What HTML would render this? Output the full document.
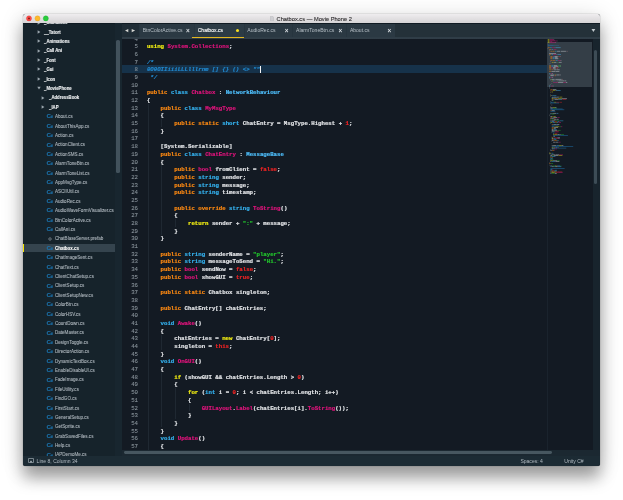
<!DOCTYPE html>
<html lang="en"><head><meta charset="utf-8"><title>Chatbox.cs — Movie Phone 2</title>
<style>
html,body{margin:0;padding:0;background:#fff;}
body{width:623px;height:500px;position:relative;overflow:hidden;font-family:"Liberation Sans",sans-serif;-webkit-font-smoothing:antialiased;}
.win{position:absolute;left:23px;top:14px;width:576.5px;height:451.5px;border-radius:2.5px;background:#131a23;
 box-shadow:0 12px 16px 0 rgba(0,0,0,.34),0 3px 24px rgba(0,0,0,.14),0 0 0 .5px rgba(0,0,0,.12);}
.clip{position:absolute;left:0;top:0;right:0;bottom:0;border-radius:2.5px;overflow:hidden;will-change:transform;}
.title{position:absolute;left:0;top:0;right:0;height:8.8px;background:linear-gradient(#efedef,#d6d4d6);}
.title b{position:absolute;top:1.8px;width:5.3px;height:5.3px;border-radius:50%;box-sizing:border-box;}
.title .ttl{position:absolute;left:253.6px;top:0;height:9px;line-height:10px;font-size:5.69px;color:#2c2a2c;white-space:nowrap;-webkit-text-stroke:.1px;}
.title .doc{position:absolute;left:247.2px;top:2.4px;width:3.2px;height:4.2px;background:#9d9da3;border-radius:.4px;}
.side{position:absolute;left:0;top:8.8px;width:99px;bottom:9.5px;background:#16232b;overflow:hidden;}
.side .in{position:absolute;left:0;top:-8.8px;width:99px;}
.side:before{content:"";position:absolute;left:0;right:0;top:0;height:.9px;background:#0f1a22;}
.sgap{position:absolute;left:91.5px;top:9px;width:7.5px;bottom:9.5px;background:#18262f;}
.sthumb{position:absolute;left:93.4px;top:25.5px;width:3.2px;height:133px;border-radius:1.6px;background:#42525c;}
.fo,.fi,.cs{position:absolute;height:9.397px;line-height:9.397px;white-space:nowrap;}
.fo{font-weight:bold;font-size:4.85px;color:#f1f3f5;transform:scaleX(.885);transform-origin:0 50%;margin-top:.45px;-webkit-text-stroke:.12px;}
.fi{left:32px;font-size:4.55px;color:#aeb7be;margin-top:.45px;-webkit-text-stroke:.08px;}
.fi.on{color:#fff;font-weight:bold;font-size:4.45px;}
.cs{left:23.6px;font-size:6.2px;font-weight:bold;color:#1c73ad;letter-spacing:-.45px;margin-top:-.35px;-webkit-text-stroke:.1px;}
.cs small{font-size:3.6px;}
.pf{position:absolute;left:24.6px;}
.ar{position:absolute;}
.sel{position:absolute;left:0;width:91.7px;height:8.5px;background:#35444e;border-left:1.5px solid #f6e500;box-sizing:border-box;}
.tabs{position:absolute;left:99px;top:8.8px;right:0;height:16.2px;background:#243139;}
.tabs .tl{position:absolute;left:0;right:0;top:0;height:1px;background:#101b23;}
.tabs .nav{position:absolute;left:0;top:1px;width:17px;height:12.8px;background:#202d36;}
.tabs .under{position:absolute;left:0;right:0;top:13.8px;height:2.4px;background:linear-gradient(#2c3943,#34424c 60%,#2a3640);}
.tab{position:absolute;top:1px;height:12.8px;background:#2b3943;box-shadow:inset .5px 0 0 #25323c;}
.tab span{position:absolute;left:3.7px;top:0;line-height:13.4px;font-size:5.05px;color:#b7c0c7;white-space:nowrap;}
.tab.act span{color:#fff;left:4.1px;-webkit-text-stroke:.1px;}
.tab.act{background:#2c3b45;}
.tab.act:after{content:"";position:absolute;left:-1.5px;right:0;top:12.9px;height:1.3px;background:#e3b71f;}
.tab .x{position:absolute;right:3.9px;top:0;line-height:13.2px;font-size:6.4px;font-style:normal;font-weight:bold;color:#d9dee2;}
.tab .dot{position:absolute;right:4.6px;top:5px;width:3.2px;height:3.2px;border-radius:50%;background:#f7df1e;}
.ed{position:absolute;left:99px;top:25px;width:425px;height:410.5px;background:#131a23;overflow:hidden;}
.hl{position:absolute;left:0;right:0;top:26.31px;height:7.693px;background:#16324a;}
.gut,.code{position:absolute;top:-3.459px;margin:0;font-family:"Liberation Mono",monospace;font-weight:bold;font-size:5.717px;line-height:7.693px;white-space:pre;}
.gut{left:0;width:16px;text-align:right;color:#8a949c;font-weight:normal;-webkit-text-stroke:.08px;}
.code{left:24.9px;color:#e2e4e7;-webkit-text-stroke:.18px;}
.ig{position:absolute;width:.5px;background:#1f2832;}
.cur{position:absolute;left:138.09px;top:26.71px;width:.6px;height:6.89px;background:#f4f4f4;}
.k{color:#ff8a12}.t{color:#35b4f2}.b{color:#e0147c}.n{color:#e0147c}.i{color:#4fc1ff}.r{color:#f02323}.s{color:#22c42c}.y{color:#f2ee12}.c{color:#2187cc}
.c{font-style:italic}
.mmw{position:absolute;left:524.2px;top:25px;width:45.3px;height:410.5px;background:#131a23;box-shadow:inset .6px 0 0 #202a34;overflow:hidden;}
.mmv{position:absolute;left:0;top:3.1px;width:44.8px;height:45.4px;background:#343e47;}
.mm{position:absolute;left:0;top:0;opacity:.72;}
.vs{position:absolute;left:569.5px;top:25px;width:7px;height:420px;background:#18242d;}
.vs i{position:absolute;left:1.9px;top:10.6px;width:2.9px;height:134px;border-radius:1.5px;background:#3d4c56;}
.hs{position:absolute;left:99px;top:435.5px;right:0;height:6.5px;background:#1b2831;}
.hs i{position:absolute;left:1.6px;top:1.4px;width:428px;height:2.7px;border-radius:1.4px;background:#475760;}
.stat{position:absolute;left:0;right:0;bottom:0;height:9.5px;background:#1c2b34;font-size:5.05px;color:#b3bcc3;line-height:11px;white-space:nowrap;}
.stat span{position:absolute;top:0;}
.stat .ic{position:absolute;left:4.8px;top:2.3px;}
.dd{position:absolute;right:3.2px;top:5.2px;}
.nv{position:absolute;top:5.2px;width:0;height:0;border-top:1.7px solid transparent;border-bottom:1.7px solid transparent;}
</style></head><body>
<div class="win"><div class="clip">
<div class="title"><svg style="position:absolute;left:0;top:0" width="60" height="9" viewBox="0 0 60 9"><circle cx="6" cy="4.4" r="2.55" fill="#fd4a46" stroke="#e03a36" stroke-width=".35"/><circle cx="6" cy="4.4" r=".95" fill="#7d1a12"/><circle cx="14.5" cy="4.4" r="2.55" fill="#fdb92c" stroke="#e0a028" stroke-width=".35"/><circle cx="22.8" cy="4.4" r="2.55" fill="#29cc3d" stroke="#1fae31" stroke-width=".35"/></svg><svg style="position:absolute;left:246.8px;top:2.2px" width="4" height="5" viewBox="0 0 4 5"><path d="M0.3 0.2 H2.6 L3.7 1.3 V4.8 H0.3 Z" fill="#cfcfd3" stroke="#a3a3a8" stroke-width=".3"/></svg><div class="ttl">Chatbox.cs — Movie Phone 2</div></div>
<div class="side"><div class="in">
<svg class="ar" style="left:14.00px;top:6.50px" width="4" height="4" viewBox="0 0 4 4"><path d="M0.6 0.3 L3.4 2 L0.6 3.7 Z" fill="#9aa5ad"/></svg><div class="fo" style="left:21.20px;top:3.80px">_Standards</div>
<svg class="ar" style="left:14.00px;top:15.90px" width="4" height="4" viewBox="0 0 4 4"><path d="M0.6 0.3 L3.4 2 L0.6 3.7 Z" fill="#9aa5ad"/></svg><div class="fo" style="left:21.20px;top:13.20px">__Tatort</div>
<svg class="ar" style="left:14.00px;top:25.29px" width="4" height="4" viewBox="0 0 4 4"><path d="M0.6 0.3 L3.4 2 L0.6 3.7 Z" fill="#9aa5ad"/></svg><div class="fo" style="left:21.20px;top:22.60px">_Animations</div>
<svg class="ar" style="left:14.00px;top:34.69px" width="4" height="4" viewBox="0 0 4 4"><path d="M0.6 0.3 L3.4 2 L0.6 3.7 Z" fill="#9aa5ad"/></svg><div class="fo" style="left:21.20px;top:31.99px">_Call Ani</div>
<svg class="ar" style="left:14.00px;top:44.09px" width="4" height="4" viewBox="0 0 4 4"><path d="M0.6 0.3 L3.4 2 L0.6 3.7 Z" fill="#9aa5ad"/></svg><div class="fo" style="left:21.20px;top:41.39px">_Font</div>
<svg class="ar" style="left:14.00px;top:53.48px" width="4" height="4" viewBox="0 0 4 4"><path d="M0.6 0.3 L3.4 2 L0.6 3.7 Z" fill="#9aa5ad"/></svg><div class="fo" style="left:21.20px;top:50.79px">_Gui</div>
<svg class="ar" style="left:14.00px;top:62.88px" width="4" height="4" viewBox="0 0 4 4"><path d="M0.6 0.3 L3.4 2 L0.6 3.7 Z" fill="#9aa5ad"/></svg><div class="fo" style="left:21.20px;top:60.18px">_Icon</div>
<svg class="ar" style="left:14.00px;top:72.28px" width="4" height="4" viewBox="0 0 4 4"><path d="M0.3 0.8 L3.7 0.8 L2 3.6 Z" fill="#9aa5ad"/></svg><div class="fo" style="left:21.20px;top:69.58px">_MoviePhone</div>
<svg class="ar" style="left:18.30px;top:81.68px" width="4" height="4" viewBox="0 0 4 4"><path d="M0.6 0.3 L3.4 2 L0.6 3.7 Z" fill="#9aa5ad"/></svg><div class="fo" style="left:25.50px;top:78.98px">_AddressBook</div>
<svg class="ar" style="left:18.30px;top:91.07px" width="4" height="4" viewBox="0 0 4 4"><path d="M0.6 0.3 L3.4 2 L0.6 3.7 Z" fill="#9aa5ad"/></svg><div class="fo" style="left:25.50px;top:88.37px">_IAP</div>
<div class="cs" style="top:97.77px">C<small>#</small></div><div class="fi" style="top:97.77px">About.cs</div>
<div class="cs" style="top:107.17px">C<small>#</small></div><div class="fi" style="top:107.17px">AboutThisApp.cs</div>
<div class="cs" style="top:116.57px">C<small>#</small></div><div class="fi" style="top:116.57px">Action.cs</div>
<div class="cs" style="top:125.96px">C<small>#</small></div><div class="fi" style="top:125.96px">ActionClient.cs</div>
<div class="cs" style="top:135.36px">C<small>#</small></div><div class="fi" style="top:135.36px">ActionSMS.cs</div>
<div class="cs" style="top:144.76px">C<small>#</small></div><div class="fi" style="top:144.76px">AlarmToneBtn.cs</div>
<div class="cs" style="top:154.15px">C<small>#</small></div><div class="fi" style="top:154.15px">AlarmToneList.cs</div>
<div class="cs" style="top:163.55px">C<small>#</small></div><div class="fi" style="top:163.55px">AppMsgType.cs</div>
<div class="cs" style="top:172.95px">C<small>#</small></div><div class="fi" style="top:172.95px">ASCIIUtil.cs</div>
<div class="cs" style="top:182.34px">C<small>#</small></div><div class="fi" style="top:182.34px">AudioRec.cs</div>
<div class="cs" style="top:191.74px">C<small>#</small></div><div class="fi" style="top:191.74px">AudioWaveFormVisualizer.cs</div>
<div class="cs" style="top:201.14px">C<small>#</small></div><div class="fi" style="top:201.14px">BtnColorActive.cs</div>
<div class="cs" style="top:210.54px">C<small>#</small></div><div class="fi" style="top:210.54px">CallAni.cs</div>
<svg class="pf" style="top:222.63px" width="4" height="4" viewBox="0 0 4 4"><circle cx="2" cy="2" r="1.25" fill="none" stroke="#8b959c" stroke-width=".7"/></svg><div class="fi" style="top:219.93px">ChatBlaseServer.prefab</div>
<div class="sel" style="top:229.63px"></div>
<div class="cs" style="top:229.33px">C<small>#</small></div><div class="fi on" style="top:229.33px">Chatbox.cs</div>
<div class="cs" style="top:238.73px">C<small>#</small></div><div class="fi" style="top:238.73px">ChatImageSent.cs</div>
<div class="cs" style="top:248.12px">C<small>#</small></div><div class="fi" style="top:248.12px">ChatText.cs</div>
<div class="cs" style="top:257.52px">C<small>#</small></div><div class="fi" style="top:257.52px">ClientChatSetup.cs</div>
<div class="cs" style="top:266.92px">C<small>#</small></div><div class="fi" style="top:266.92px">ClientSetup.cs</div>
<div class="cs" style="top:276.31px">C<small>#</small></div><div class="fi" style="top:276.31px">ClientSetupNew.cs</div>
<div class="cs" style="top:285.71px">C<small>#</small></div><div class="fi" style="top:285.71px">ColorBtn.cs</div>
<div class="cs" style="top:295.11px">C<small>#</small></div><div class="fi" style="top:295.11px">ColorHSV.cs</div>
<div class="cs" style="top:304.51px">C<small>#</small></div><div class="fi" style="top:304.51px">CountDown.cs</div>
<div class="cs" style="top:313.90px">C<small>#</small></div><div class="fi" style="top:313.90px">DateMaster.cs</div>
<div class="cs" style="top:323.30px">C<small>#</small></div><div class="fi" style="top:323.30px">DesignToggle.cs</div>
<div class="cs" style="top:332.70px">C<small>#</small></div><div class="fi" style="top:332.70px">DirectorAction.cs</div>
<div class="cs" style="top:342.09px">C<small>#</small></div><div class="fi" style="top:342.09px">DynamicTextBox.cs</div>
<div class="cs" style="top:351.49px">C<small>#</small></div><div class="fi" style="top:351.49px">EnableDisableUI.cs</div>
<div class="cs" style="top:360.89px">C<small>#</small></div><div class="fi" style="top:360.89px">FadeImage.cs</div>
<div class="cs" style="top:370.28px">C<small>#</small></div><div class="fi" style="top:370.28px">FileUtility.cs</div>
<div class="cs" style="top:379.68px">C<small>#</small></div><div class="fi" style="top:379.68px">FindGO.cs</div>
<div class="cs" style="top:389.08px">C<small>#</small></div><div class="fi" style="top:389.08px">FirstStart.cs</div>
<div class="cs" style="top:398.48px">C<small>#</small></div><div class="fi" style="top:398.48px">GeneralSetup.cs</div>
<div class="cs" style="top:407.87px">C<small>#</small></div><div class="fi" style="top:407.87px">GetSprite.cs</div>
<div class="cs" style="top:417.27px">C<small>#</small></div><div class="fi" style="top:417.27px">GrabSavedFiles.cs</div>
<div class="cs" style="top:426.67px">C<small>#</small></div><div class="fi" style="top:426.67px">Help.cs</div>
<div class="cs" style="top:436.06px">C<small>#</small></div><div class="fi" style="top:436.06px">IAPDemoMe.cs</div>
</div></div>
<div class="sgap"></div><div class="sthumb"></div>
<div class="tabs"><div class="tl"></div><div class="nav"><svg style="position:absolute;left:0;top:0" width="17" height="13" viewBox="0 0 17 13"><path d="M6.3 4.9 L6.3 8.3 L3 6.6 Z M9.7 4.9 L9.7 8.3 L13.1 6.6 Z" fill="#d5d6d2"/></svg></div><div class="under"></div><div class="tab" style="left:17.00px;width:54.60px"><span>BtnColorActive.cs</span><i class="x">×</i></div><div class="tab act" style="left:71.60px;width:50.00px"><span>Chatbox.cs</span><i class="dot"></i></div><div class="tab" style="left:121.60px;width:48.80px"><span>AudioRec.cs</span><i class="x">×</i></div><div class="tab" style="left:170.40px;width:53.80px"><span>AlarmToneBtn.cs</span><i class="x">×</i></div><div class="tab" style="left:224.20px;width:49.00px"><span>About.cs</span><i class="x">×</i></div><svg class="dd" width="6" height="5" viewBox="0 0 6 5"><path d="M1.5 1.1 L5.3 1.1 L3.4 3.9 Z" fill="#c3cacf"/></svg></div>
<div class="ed"><div class="hl"></div><div class="ig" style="left:25.50px;top:64.78px;height:346.19px"></div><div class="ig" style="left:39.22px;top:80.16px;height:7.69px"></div><div class="ig" style="left:39.22px;top:126.32px;height:69.24px"></div><div class="ig" style="left:39.22px;top:295.57px;height:15.39px"></div><div class="ig" style="left:39.22px;top:334.03px;height:53.85px"></div><div class="ig" style="left:52.94px;top:180.17px;height:7.69px"></div><div class="ig" style="left:52.94px;top:349.42px;height:30.77px"></div><div class="ig" style="left:66.66px;top:364.80px;height:7.69px"></div>
<pre class="gut">4
5
6
7
8
9
10
11
12
13
14
15
16
17
18
19
20
21
22
23
24
25
26
27
28
29
30
31
32
33
34
35
36
37
38
39
40
41
42
43
44
45
46
47
48
49
50
51
52
53
54
55
56
57</pre>
<pre class="code">

<span class="y">using</span> <span class="n">System.Collections</span>;

<span class="c">/*</span>
<span class="c">0O0OIIiiiLLLlllrnm [] {} () &lt;&gt; ""</span>
<span class="c"> */</span>

<span class="k">public</span> <span class="t">class</span> <span class="n">Chatbox</span> : <span class="i">NetworkBehaviour</span>
{
    <span class="k">public</span> <span class="t">class</span> <span class="n">MyMsgType</span>
    {
        <span class="k">public</span> <span class="k">static</span> <span class="t">short</span> ChatEntry = MsgType.Highest + <span class="r">1</span>;
    }

    [System.Serializable]
    <span class="k">public</span> <span class="t">class</span> <span class="n">ChatEntry</span> : <span class="i">MessageBase</span>
    {
        <span class="k">public</span> <span class="b">bool</span> fromClient = <span class="r">false</span>;
        <span class="k">public</span> <span class="t">string</span> sender;
        <span class="k">public</span> <span class="t">string</span> message;
        <span class="k">public</span> <span class="t">string</span> timestamp;

        <span class="k">public</span> <span class="k">override</span> <span class="t">string</span> <span class="n">ToString</span>()
        {
            <span class="y">return</span> sender + <span class="s">":"</span> + message;
        }
    }

    <span class="k">public</span> <span class="t">string</span> senderName = <span class="s">"player"</span>;
    <span class="k">public</span> <span class="t">string</span> messageToSend = <span class="s">"Hi."</span>;
    <span class="k">public</span> <span class="b">bool</span> sendNow = <span class="r">false</span>;
    <span class="k">public</span> <span class="b">bool</span> showGUI = <span class="r">true</span>;

    <span class="k">public</span> <span class="k">static</span> Chatbox singleton;

    <span class="k">public</span> ChatEntry[] chatEntries;

    <span class="t">void</span> <span class="n">Awake</span>()
    {
        chatEntries = <span class="y">new</span> ChatEntry[<span class="r">0</span>];
        singleton = <span class="r">this</span>;
    }
    <span class="t">void</span> <span class="n">OnGUI</span>()
    {
        <span class="y">if</span> (showGUI &amp;&amp; chatEntries.Length &gt; <span class="r">0</span>)
        {
            <span class="y">for</span> (<span class="t">int</span> i = <span class="r">0</span>; i &lt; chatEntries.Length; i++)
            {
                <span class="n">GUILayout</span>.<span class="n">Label</span>(chatEntries[i].<span class="n">ToString</span>());
            }
        }
    }
    <span class="t">void</span> <span class="n">Update</span>()
    {</pre>
<div class="cur"></div></div>
<div class="mmw"><div class="mmv"></div><svg class="mm" width="45" height="140" viewBox="0 0 45 140"><rect x="0.80" y="0.00" width="1.65" height="0.55" fill="#f2ee12"/><rect x="2.78" y="0.00" width="3.63" height="0.55" fill="#e0147c"/><rect x="6.41" y="0.00" width="0.33" height="0.55" fill="#e2e4e7"/><rect x="0.80" y="0.85" width="1.65" height="0.55" fill="#f2ee12"/><rect x="2.78" y="0.85" width="4.62" height="0.55" fill="#e0147c"/><rect x="7.40" y="0.85" width="0.33" height="0.55" fill="#e2e4e7"/><rect x="0.80" y="1.70" width="1.65" height="0.55" fill="#f2ee12"/><rect x="2.78" y="1.70" width="7.26" height="0.55" fill="#e0147c"/><rect x="10.04" y="1.70" width="0.33" height="0.55" fill="#e2e4e7"/><rect x="0.80" y="2.55" width="1.65" height="0.55" fill="#f2ee12"/><rect x="2.78" y="2.55" width="1.98" height="0.55" fill="#e0147c"/><rect x="4.76" y="2.55" width="0.33" height="0.55" fill="#e2e4e7"/><rect x="0.80" y="3.40" width="1.65" height="0.55" fill="#f2ee12"/><rect x="2.78" y="3.40" width="5.94" height="0.55" fill="#e0147c"/><rect x="8.72" y="3.40" width="0.33" height="0.55" fill="#e2e4e7"/><rect x="0.80" y="5.10" width="0.66" height="0.55" fill="#2187cc"/><rect x="0.80" y="5.95" width="5.94" height="0.55" fill="#2187cc"/><rect x="7.07" y="5.95" width="0.66" height="0.55" fill="#2187cc"/><rect x="8.06" y="5.95" width="0.66" height="0.55" fill="#2187cc"/><rect x="9.05" y="5.95" width="0.66" height="0.55" fill="#2187cc"/><rect x="10.04" y="5.95" width="0.66" height="0.55" fill="#2187cc"/><rect x="11.03" y="5.95" width="0.66" height="0.55" fill="#2187cc"/><rect x="1.13" y="6.80" width="0.66" height="0.55" fill="#2187cc"/><rect x="0.80" y="8.50" width="1.98" height="0.55" fill="#ff8a12"/><rect x="3.11" y="8.50" width="1.65" height="0.55" fill="#35b4f2"/><rect x="5.09" y="8.50" width="2.31" height="0.55" fill="#e0147c"/><rect x="7.73" y="8.50" width="0.33" height="0.55" fill="#e2e4e7"/><rect x="8.39" y="8.50" width="5.28" height="0.55" fill="#4fc1ff"/><rect x="0.80" y="9.35" width="0.33" height="0.55" fill="#e2e4e7"/><rect x="2.12" y="10.20" width="1.98" height="0.55" fill="#ff8a12"/><rect x="4.43" y="10.20" width="1.65" height="0.55" fill="#35b4f2"/><rect x="6.41" y="10.20" width="2.97" height="0.55" fill="#e0147c"/><rect x="2.12" y="11.05" width="0.33" height="0.55" fill="#e2e4e7"/><rect x="3.44" y="11.90" width="1.98" height="0.55" fill="#ff8a12"/><rect x="5.75" y="11.90" width="1.98" height="0.55" fill="#ff8a12"/><rect x="8.06" y="11.90" width="1.65" height="0.55" fill="#35b4f2"/><rect x="10.04" y="11.90" width="2.97" height="0.55" fill="#e2e4e7"/><rect x="13.34" y="11.90" width="0.33" height="0.55" fill="#e2e4e7"/><rect x="14.00" y="11.90" width="4.95" height="0.55" fill="#e2e4e7"/><rect x="19.28" y="11.90" width="0.33" height="0.55" fill="#e2e4e7"/><rect x="19.94" y="11.90" width="0.33" height="0.55" fill="#f02323"/><rect x="20.27" y="11.90" width="0.33" height="0.55" fill="#e2e4e7"/><rect x="2.12" y="12.75" width="0.33" height="0.55" fill="#e2e4e7"/><rect x="2.12" y="14.45" width="6.93" height="0.55" fill="#e2e4e7"/><rect x="2.12" y="15.30" width="1.98" height="0.55" fill="#ff8a12"/><rect x="4.43" y="15.30" width="1.65" height="0.55" fill="#35b4f2"/><rect x="6.41" y="15.30" width="2.97" height="0.55" fill="#e0147c"/><rect x="9.71" y="15.30" width="0.33" height="0.55" fill="#e2e4e7"/><rect x="10.37" y="15.30" width="3.63" height="0.55" fill="#4fc1ff"/><rect x="2.12" y="16.15" width="0.33" height="0.55" fill="#e2e4e7"/><rect x="3.44" y="17.00" width="1.98" height="0.55" fill="#ff8a12"/><rect x="5.75" y="17.00" width="1.32" height="0.55" fill="#e0147c"/><rect x="7.40" y="17.00" width="3.30" height="0.55" fill="#e2e4e7"/><rect x="11.03" y="17.00" width="0.33" height="0.55" fill="#e2e4e7"/><rect x="11.69" y="17.00" width="1.65" height="0.55" fill="#f02323"/><rect x="13.34" y="17.00" width="0.33" height="0.55" fill="#e2e4e7"/><rect x="3.44" y="17.85" width="1.98" height="0.55" fill="#ff8a12"/><rect x="5.75" y="17.85" width="1.98" height="0.55" fill="#35b4f2"/><rect x="8.06" y="17.85" width="2.31" height="0.55" fill="#e2e4e7"/><rect x="3.44" y="18.70" width="1.98" height="0.55" fill="#ff8a12"/><rect x="5.75" y="18.70" width="1.98" height="0.55" fill="#35b4f2"/><rect x="8.06" y="18.70" width="2.64" height="0.55" fill="#e2e4e7"/><rect x="3.44" y="19.55" width="1.98" height="0.55" fill="#ff8a12"/><rect x="5.75" y="19.55" width="1.98" height="0.55" fill="#35b4f2"/><rect x="8.06" y="19.55" width="3.30" height="0.55" fill="#e2e4e7"/><rect x="3.44" y="21.25" width="1.98" height="0.55" fill="#ff8a12"/><rect x="5.75" y="21.25" width="2.64" height="0.55" fill="#ff8a12"/><rect x="8.72" y="21.25" width="1.98" height="0.55" fill="#35b4f2"/><rect x="11.03" y="21.25" width="2.64" height="0.55" fill="#e0147c"/><rect x="13.67" y="21.25" width="0.66" height="0.55" fill="#e2e4e7"/><rect x="3.44" y="22.10" width="0.33" height="0.55" fill="#e2e4e7"/><rect x="4.76" y="22.95" width="1.98" height="0.55" fill="#f2ee12"/><rect x="7.07" y="22.95" width="1.98" height="0.55" fill="#e2e4e7"/><rect x="9.38" y="22.95" width="0.33" height="0.55" fill="#e2e4e7"/><rect x="10.04" y="22.95" width="0.99" height="0.55" fill="#22c42c"/><rect x="11.36" y="22.95" width="0.33" height="0.55" fill="#e2e4e7"/><rect x="12.02" y="22.95" width="2.64" height="0.55" fill="#e2e4e7"/><rect x="3.44" y="23.80" width="0.33" height="0.55" fill="#e2e4e7"/><rect x="2.12" y="24.65" width="0.33" height="0.55" fill="#e2e4e7"/><rect x="2.12" y="26.35" width="1.98" height="0.55" fill="#ff8a12"/><rect x="4.43" y="26.35" width="1.98" height="0.55" fill="#35b4f2"/><rect x="6.74" y="26.35" width="3.30" height="0.55" fill="#e2e4e7"/><rect x="10.37" y="26.35" width="0.33" height="0.55" fill="#e2e4e7"/><rect x="11.03" y="26.35" width="2.64" height="0.55" fill="#22c42c"/><rect x="13.67" y="26.35" width="0.33" height="0.55" fill="#e2e4e7"/><rect x="2.12" y="27.20" width="1.98" height="0.55" fill="#ff8a12"/><rect x="4.43" y="27.20" width="1.98" height="0.55" fill="#35b4f2"/><rect x="6.74" y="27.20" width="4.29" height="0.55" fill="#e2e4e7"/><rect x="11.36" y="27.20" width="0.33" height="0.55" fill="#e2e4e7"/><rect x="12.02" y="27.20" width="1.65" height="0.55" fill="#22c42c"/><rect x="13.67" y="27.20" width="0.33" height="0.55" fill="#e2e4e7"/><rect x="2.12" y="28.05" width="1.98" height="0.55" fill="#ff8a12"/><rect x="4.43" y="28.05" width="1.32" height="0.55" fill="#e0147c"/><rect x="6.08" y="28.05" width="2.31" height="0.55" fill="#e2e4e7"/><rect x="8.72" y="28.05" width="0.33" height="0.55" fill="#e2e4e7"/><rect x="9.38" y="28.05" width="1.65" height="0.55" fill="#f02323"/><rect x="11.03" y="28.05" width="0.33" height="0.55" fill="#e2e4e7"/><rect x="2.12" y="28.90" width="1.98" height="0.55" fill="#ff8a12"/><rect x="4.43" y="28.90" width="1.32" height="0.55" fill="#e0147c"/><rect x="6.08" y="28.90" width="2.31" height="0.55" fill="#e2e4e7"/><rect x="8.72" y="28.90" width="0.33" height="0.55" fill="#e2e4e7"/><rect x="9.38" y="28.90" width="1.32" height="0.55" fill="#f02323"/><rect x="10.70" y="28.90" width="0.33" height="0.55" fill="#e2e4e7"/><rect x="2.12" y="30.60" width="1.98" height="0.55" fill="#ff8a12"/><rect x="4.43" y="30.60" width="1.98" height="0.55" fill="#ff8a12"/><rect x="6.74" y="30.60" width="2.31" height="0.55" fill="#e2e4e7"/><rect x="9.38" y="30.60" width="3.30" height="0.55" fill="#e2e4e7"/><rect x="2.12" y="32.30" width="1.98" height="0.55" fill="#ff8a12"/><rect x="4.43" y="32.30" width="3.63" height="0.55" fill="#e2e4e7"/><rect x="8.39" y="32.30" width="3.96" height="0.55" fill="#e2e4e7"/><rect x="2.12" y="34.00" width="1.32" height="0.55" fill="#35b4f2"/><rect x="3.77" y="34.00" width="1.65" height="0.55" fill="#e0147c"/><rect x="5.42" y="34.00" width="0.66" height="0.55" fill="#e2e4e7"/><rect x="2.12" y="34.85" width="0.33" height="0.55" fill="#e2e4e7"/><rect x="3.44" y="35.70" width="3.63" height="0.55" fill="#e2e4e7"/><rect x="7.40" y="35.70" width="0.33" height="0.55" fill="#e2e4e7"/><rect x="8.06" y="35.70" width="0.99" height="0.55" fill="#f2ee12"/><rect x="9.38" y="35.70" width="3.30" height="0.55" fill="#e2e4e7"/><rect x="12.68" y="35.70" width="0.33" height="0.55" fill="#f02323"/><rect x="13.01" y="35.70" width="0.66" height="0.55" fill="#e2e4e7"/><rect x="3.44" y="36.55" width="2.97" height="0.55" fill="#e2e4e7"/><rect x="6.74" y="36.55" width="0.33" height="0.55" fill="#e2e4e7"/><rect x="7.40" y="36.55" width="1.32" height="0.55" fill="#f02323"/><rect x="8.72" y="36.55" width="0.33" height="0.55" fill="#e2e4e7"/><rect x="2.12" y="37.40" width="0.33" height="0.55" fill="#e2e4e7"/><rect x="2.12" y="38.25" width="1.32" height="0.55" fill="#35b4f2"/><rect x="3.77" y="38.25" width="1.65" height="0.55" fill="#e0147c"/><rect x="5.42" y="38.25" width="0.66" height="0.55" fill="#e2e4e7"/><rect x="2.12" y="39.10" width="0.33" height="0.55" fill="#e2e4e7"/><rect x="3.44" y="39.95" width="0.66" height="0.55" fill="#f2ee12"/><rect x="4.43" y="39.95" width="2.64" height="0.55" fill="#e2e4e7"/><rect x="7.40" y="39.95" width="0.66" height="0.55" fill="#e2e4e7"/><rect x="8.39" y="39.95" width="5.94" height="0.55" fill="#e2e4e7"/><rect x="14.66" y="39.95" width="0.33" height="0.55" fill="#e2e4e7"/><rect x="15.32" y="39.95" width="0.33" height="0.55" fill="#f02323"/><rect x="15.65" y="39.95" width="0.33" height="0.55" fill="#e2e4e7"/><rect x="3.44" y="40.80" width="0.33" height="0.55" fill="#e2e4e7"/><rect x="4.76" y="41.65" width="0.99" height="0.55" fill="#f2ee12"/><rect x="6.08" y="41.65" width="0.33" height="0.55" fill="#e2e4e7"/><rect x="6.41" y="41.65" width="0.99" height="0.55" fill="#35b4f2"/><rect x="7.73" y="41.65" width="0.33" height="0.55" fill="#e2e4e7"/><rect x="8.39" y="41.65" width="0.33" height="0.55" fill="#e2e4e7"/><rect x="9.05" y="41.65" width="0.33" height="0.55" fill="#f02323"/><rect x="9.38" y="41.65" width="0.33" height="0.55" fill="#e2e4e7"/><rect x="10.04" y="41.65" width="0.33" height="0.55" fill="#e2e4e7"/><rect x="10.70" y="41.65" width="0.33" height="0.55" fill="#e2e4e7"/><rect x="11.36" y="41.65" width="6.27" height="0.55" fill="#e2e4e7"/><rect x="17.96" y="41.65" width="1.32" height="0.55" fill="#e2e4e7"/><rect x="4.76" y="42.50" width="0.33" height="0.55" fill="#e2e4e7"/><rect x="6.08" y="43.35" width="2.97" height="0.55" fill="#e0147c"/><rect x="9.05" y="43.35" width="0.33" height="0.55" fill="#e2e4e7"/><rect x="9.38" y="43.35" width="1.65" height="0.55" fill="#e0147c"/><rect x="11.03" y="43.35" width="5.28" height="0.55" fill="#e2e4e7"/><rect x="16.31" y="43.35" width="2.64" height="0.55" fill="#e0147c"/><rect x="18.95" y="43.35" width="1.32" height="0.55" fill="#e2e4e7"/><rect x="4.76" y="44.20" width="0.33" height="0.55" fill="#e2e4e7"/><rect x="3.44" y="45.05" width="0.33" height="0.55" fill="#e2e4e7"/><rect x="2.12" y="45.90" width="0.33" height="0.55" fill="#e2e4e7"/><rect x="2.12" y="46.75" width="1.32" height="0.55" fill="#35b4f2"/><rect x="3.77" y="46.75" width="1.98" height="0.55" fill="#e0147c"/><rect x="5.75" y="46.75" width="0.66" height="0.55" fill="#e2e4e7"/><rect x="2.12" y="47.60" width="0.33" height="0.55" fill="#e2e4e7"/><rect x="2.12" y="48.45" width="0.33" height="0.55" fill="#e2e4e7"/><rect x="2.12" y="49.30" width="0.33" height="0.55" fill="#e2e4e7"/><rect x="3.44" y="50.15" width="1.98" height="0.55" fill="#ff8a12"/><rect x="5.75" y="50.15" width="3.63" height="0.55" fill="#e2e4e7"/><rect x="3.44" y="51.00" width="0.66" height="0.55" fill="#ff8a12"/><rect x="4.43" y="51.00" width="0.99" height="0.55" fill="#f02323"/><rect x="5.75" y="51.00" width="2.64" height="0.55" fill="#f2ee12"/><rect x="8.72" y="51.00" width="0.99" height="0.55" fill="#e2e4e7"/><rect x="9.71" y="51.00" width="3.96" height="0.55" fill="#4fc1ff"/><rect x="3.44" y="52.70" width="0.99" height="0.55" fill="#ff8a12"/><rect x="4.76" y="52.70" width="1.32" height="0.55" fill="#f2ee12"/><rect x="3.44" y="53.55" width="0.33" height="0.55" fill="#e2e4e7"/><rect x="3.44" y="55.25" width="0.33" height="0.55" fill="#e2e4e7"/><rect x="3.44" y="56.10" width="0.66" height="0.55" fill="#f2ee12"/><rect x="4.43" y="56.10" width="0.99" height="0.55" fill="#e2e4e7"/><rect x="5.75" y="56.10" width="3.63" height="0.55" fill="#35b4f2"/><rect x="3.44" y="56.95" width="0.33" height="0.55" fill="#e2e4e7"/><rect x="4.76" y="57.80" width="1.32" height="0.55" fill="#35b4f2"/><rect x="6.41" y="57.80" width="2.97" height="0.55" fill="#e2e4e7"/><rect x="9.71" y="57.80" width="1.32" height="0.55" fill="#e2e4e7"/><rect x="11.03" y="57.80" width="0.99" height="0.55" fill="#e2e4e7"/><rect x="12.35" y="57.80" width="2.97" height="0.55" fill="#f2ee12"/><rect x="4.76" y="58.65" width="1.98" height="0.55" fill="#e2e4e7"/><rect x="7.07" y="58.65" width="3.30" height="0.55" fill="#35b4f2"/><rect x="4.76" y="59.50" width="1.65" height="0.55" fill="#f2ee12"/><rect x="6.74" y="59.50" width="3.96" height="0.55" fill="#ff8a12"/><rect x="11.03" y="59.50" width="3.63" height="0.55" fill="#f2ee12"/><rect x="14.66" y="59.50" width="2.31" height="0.55" fill="#e2e4e7"/><rect x="16.97" y="59.50" width="2.97" height="0.55" fill="#e2e4e7"/><rect x="4.76" y="60.35" width="1.32" height="0.55" fill="#ff8a12"/><rect x="6.41" y="60.35" width="0.99" height="0.55" fill="#4fc1ff"/><rect x="7.73" y="60.35" width="3.96" height="0.55" fill="#e2e4e7"/><rect x="12.02" y="60.35" width="2.97" height="0.55" fill="#4fc1ff"/><rect x="15.32" y="60.35" width="3.96" height="0.55" fill="#f02323"/><rect x="4.76" y="61.20" width="0.99" height="0.55" fill="#e2e4e7"/><rect x="6.08" y="61.20" width="0.66" height="0.55" fill="#22c42c"/><rect x="3.44" y="62.05" width="0.33" height="0.55" fill="#e2e4e7"/><rect x="3.44" y="62.90" width="1.65" height="0.55" fill="#35b4f2"/><rect x="5.42" y="62.90" width="1.32" height="0.55" fill="#35b4f2"/><rect x="7.07" y="62.90" width="1.98" height="0.55" fill="#f2ee12"/><rect x="9.05" y="62.90" width="3.30" height="0.55" fill="#f02323"/><rect x="12.68" y="62.90" width="2.31" height="0.55" fill="#f02323"/><rect x="3.44" y="63.75" width="8.58" height="0.55" fill="#2187cc"/><rect x="3.44" y="64.60" width="0.33" height="0.55" fill="#e2e4e7"/><rect x="4.76" y="65.45" width="0.33" height="0.55" fill="#e2e4e7"/><rect x="4.76" y="66.30" width="0.33" height="0.55" fill="#e2e4e7"/><rect x="3.44" y="67.15" width="0.33" height="0.55" fill="#e2e4e7"/><rect x="3.44" y="68.00" width="0.99" height="0.55" fill="#e2e4e7"/><rect x="4.76" y="68.00" width="0.66" height="0.55" fill="#e2e4e7"/><rect x="5.75" y="68.00" width="2.31" height="0.55" fill="#f2ee12"/><rect x="8.06" y="68.00" width="1.32" height="0.55" fill="#e2e4e7"/><rect x="3.44" y="68.85" width="2.31" height="0.55" fill="#e2e4e7"/><rect x="6.08" y="68.85" width="3.96" height="0.55" fill="#22c42c"/><rect x="3.44" y="69.70" width="12.21" height="0.55" fill="#2187cc"/><rect x="3.44" y="70.55" width="13.86" height="0.55" fill="#2187cc"/><rect x="3.44" y="71.40" width="0.99" height="0.55" fill="#ff8a12"/><rect x="4.76" y="71.40" width="2.97" height="0.55" fill="#e2e4e7"/><rect x="3.44" y="72.25" width="4.95" height="0.55" fill="#2187cc"/><rect x="3.44" y="73.95" width="0.66" height="0.55" fill="#e2e4e7"/><rect x="4.43" y="73.95" width="0.66" height="0.55" fill="#e2e4e7"/><rect x="5.42" y="73.95" width="3.63" height="0.55" fill="#e2e4e7"/><rect x="9.38" y="73.95" width="1.98" height="0.55" fill="#4fc1ff"/><rect x="3.44" y="74.80" width="0.66" height="0.55" fill="#35b4f2"/><rect x="4.43" y="74.80" width="2.97" height="0.55" fill="#22c42c"/><rect x="2.12" y="75.65" width="0.33" height="0.55" fill="#e2e4e7"/><rect x="2.12" y="76.50" width="0.33" height="0.55" fill="#e2e4e7"/><rect x="3.44" y="77.35" width="1.65" height="0.55" fill="#e2e4e7"/><rect x="5.42" y="77.35" width="0.66" height="0.55" fill="#f2ee12"/><rect x="6.41" y="77.35" width="2.31" height="0.55" fill="#f2ee12"/><rect x="3.44" y="78.20" width="1.98" height="0.55" fill="#ff8a12"/><rect x="5.75" y="78.20" width="0.99" height="0.55" fill="#4fc1ff"/><rect x="6.74" y="78.20" width="3.30" height="0.55" fill="#e2e4e7"/><rect x="10.37" y="78.20" width="2.31" height="0.55" fill="#e0147c"/><rect x="3.44" y="79.05" width="1.32" height="0.55" fill="#e2e4e7"/><rect x="5.09" y="79.05" width="1.65" height="0.55" fill="#e2e4e7"/><rect x="6.74" y="79.05" width="1.65" height="0.55" fill="#f02323"/><rect x="3.44" y="79.90" width="0.66" height="0.55" fill="#ff8a12"/><rect x="4.43" y="79.90" width="1.98" height="0.55" fill="#22c42c"/><rect x="6.74" y="79.90" width="2.31" height="0.55" fill="#e2e4e7"/><rect x="9.38" y="79.90" width="2.31" height="0.55" fill="#e2e4e7"/><rect x="3.44" y="81.60" width="0.99" height="0.55" fill="#e2e4e7"/><rect x="4.76" y="81.60" width="3.63" height="0.55" fill="#e2e4e7"/><rect x="8.39" y="81.60" width="3.96" height="0.55" fill="#22c42c"/><rect x="12.68" y="81.60" width="0.99" height="0.55" fill="#4fc1ff"/><rect x="13.67" y="81.60" width="2.64" height="0.55" fill="#35b4f2"/><rect x="3.44" y="82.45" width="0.99" height="0.55" fill="#35b4f2"/><rect x="4.76" y="82.45" width="2.31" height="0.55" fill="#4fc1ff"/><rect x="7.40" y="82.45" width="2.97" height="0.55" fill="#f02323"/><rect x="10.70" y="82.45" width="1.32" height="0.55" fill="#35b4f2"/><rect x="12.35" y="82.45" width="0.66" height="0.55" fill="#e0147c"/><rect x="3.44" y="83.30" width="1.98" height="0.55" fill="#f2ee12"/><rect x="5.75" y="83.30" width="2.31" height="0.55" fill="#4fc1ff"/><rect x="8.39" y="83.30" width="1.32" height="0.55" fill="#f2ee12"/><rect x="10.04" y="83.30" width="0.99" height="0.55" fill="#4fc1ff"/><rect x="11.36" y="83.30" width="2.64" height="0.55" fill="#e0147c"/><rect x="3.44" y="84.15" width="0.33" height="0.55" fill="#e2e4e7"/><rect x="4.76" y="85.00" width="1.32" height="0.55" fill="#ff8a12"/><rect x="6.41" y="85.00" width="3.30" height="0.55" fill="#e2e4e7"/><rect x="10.04" y="85.00" width="2.31" height="0.55" fill="#e2e4e7"/><rect x="4.76" y="85.85" width="6.60" height="0.55" fill="#2187cc"/><rect x="4.76" y="87.55" width="2.31" height="0.55" fill="#35b4f2"/><rect x="7.40" y="87.55" width="1.32" height="0.55" fill="#f2ee12"/><rect x="9.05" y="87.55" width="3.30" height="0.55" fill="#f2ee12"/><rect x="12.68" y="87.55" width="1.32" height="0.55" fill="#22c42c"/><rect x="14.00" y="87.55" width="1.32" height="0.55" fill="#e0147c"/><rect x="4.76" y="88.40" width="1.98" height="0.55" fill="#ff8a12"/><rect x="7.07" y="88.40" width="3.96" height="0.55" fill="#e2e4e7"/><rect x="4.76" y="89.25" width="1.98" height="0.55" fill="#ff8a12"/><rect x="7.07" y="89.25" width="1.65" height="0.55" fill="#e2e4e7"/><rect x="4.76" y="90.10" width="1.65" height="0.55" fill="#e2e4e7"/><rect x="6.74" y="90.10" width="2.97" height="0.55" fill="#35b4f2"/><rect x="4.76" y="90.95" width="1.98" height="0.55" fill="#e2e4e7"/><rect x="7.07" y="90.95" width="2.97" height="0.55" fill="#e2e4e7"/><rect x="10.37" y="90.95" width="3.30" height="0.55" fill="#22c42c"/><rect x="4.76" y="91.80" width="1.98" height="0.55" fill="#e2e4e7"/><rect x="7.07" y="91.80" width="1.32" height="0.55" fill="#22c42c"/><rect x="8.72" y="91.80" width="2.97" height="0.55" fill="#f02323"/><rect x="4.76" y="92.65" width="0.66" height="0.55" fill="#35b4f2"/><rect x="5.75" y="92.65" width="1.98" height="0.55" fill="#4fc1ff"/><rect x="7.73" y="92.65" width="3.96" height="0.55" fill="#e0147c"/><rect x="4.76" y="93.50" width="0.33" height="0.55" fill="#e2e4e7"/><rect x="6.08" y="94.35" width="0.99" height="0.55" fill="#35b4f2"/><rect x="7.40" y="94.35" width="2.97" height="0.55" fill="#f02323"/><rect x="6.08" y="95.20" width="0.99" height="0.55" fill="#f2ee12"/><rect x="7.40" y="95.20" width="2.64" height="0.55" fill="#f2ee12"/><rect x="10.37" y="95.20" width="2.31" height="0.55" fill="#e2e4e7"/><rect x="13.01" y="95.20" width="0.66" height="0.55" fill="#e2e4e7"/><rect x="14.00" y="95.20" width="2.97" height="0.55" fill="#22c42c"/><rect x="6.08" y="96.05" width="14.85" height="0.55" fill="#2187cc"/><rect x="6.08" y="96.90" width="0.66" height="0.55" fill="#e2e4e7"/><rect x="7.07" y="96.90" width="0.99" height="0.55" fill="#e2e4e7"/><rect x="4.76" y="97.75" width="0.33" height="0.55" fill="#e2e4e7"/><rect x="4.76" y="98.60" width="1.32" height="0.55" fill="#f2ee12"/><rect x="6.41" y="98.60" width="3.96" height="0.55" fill="#f02323"/><rect x="10.37" y="98.60" width="2.64" height="0.55" fill="#e2e4e7"/><rect x="4.76" y="99.45" width="1.65" height="0.55" fill="#e2e4e7"/><rect x="6.74" y="99.45" width="1.98" height="0.55" fill="#35b4f2"/><rect x="9.05" y="99.45" width="2.64" height="0.55" fill="#e0147c"/><rect x="11.69" y="99.45" width="0.66" height="0.55" fill="#e2e4e7"/><rect x="4.76" y="100.30" width="1.98" height="0.55" fill="#ff8a12"/><rect x="7.07" y="100.30" width="1.98" height="0.55" fill="#35b4f2"/><rect x="9.05" y="100.30" width="0.66" height="0.55" fill="#22c42c"/><rect x="4.76" y="101.15" width="1.98" height="0.55" fill="#e2e4e7"/><rect x="7.07" y="101.15" width="3.30" height="0.55" fill="#ff8a12"/><rect x="10.37" y="101.15" width="1.32" height="0.55" fill="#35b4f2"/><rect x="4.76" y="102.00" width="0.33" height="0.55" fill="#e2e4e7"/><rect x="6.08" y="102.85" width="1.98" height="0.55" fill="#e2e4e7"/><rect x="8.39" y="102.85" width="2.97" height="0.55" fill="#e2e4e7"/><rect x="11.69" y="102.85" width="1.98" height="0.55" fill="#e0147c"/><rect x="4.76" y="104.55" width="0.33" height="0.55" fill="#e2e4e7"/><rect x="4.76" y="106.25" width="0.99" height="0.55" fill="#e2e4e7"/><rect x="6.08" y="106.25" width="2.97" height="0.55" fill="#e2e4e7"/><rect x="9.38" y="106.25" width="2.64" height="0.55" fill="#4fc1ff"/><rect x="12.02" y="106.25" width="2.64" height="0.55" fill="#f2ee12"/><rect x="14.66" y="106.25" width="1.65" height="0.55" fill="#e2e4e7"/><rect x="4.76" y="107.10" width="21.45" height="0.55" fill="#2187cc"/><rect x="4.76" y="107.95" width="1.65" height="0.55" fill="#f2ee12"/><rect x="6.74" y="107.95" width="1.32" height="0.55" fill="#ff8a12"/><rect x="8.39" y="107.95" width="1.98" height="0.55" fill="#4fc1ff"/><rect x="10.70" y="107.95" width="0.99" height="0.55" fill="#ff8a12"/><rect x="4.76" y="108.80" width="14.52" height="0.55" fill="#2187cc"/><rect x="4.76" y="109.65" width="1.98" height="0.55" fill="#e2e4e7"/><rect x="7.07" y="109.65" width="0.66" height="0.55" fill="#e2e4e7"/><rect x="8.06" y="109.65" width="1.98" height="0.55" fill="#e0147c"/><rect x="3.44" y="110.50" width="0.33" height="0.55" fill="#e2e4e7"/><rect x="3.44" y="111.35" width="1.32" height="0.55" fill="#e2e4e7"/><rect x="5.09" y="111.35" width="1.98" height="0.55" fill="#ff8a12"/><rect x="7.40" y="111.35" width="0.66" height="0.55" fill="#e0147c"/><rect x="2.12" y="113.05" width="0.33" height="0.55" fill="#e2e4e7"/><rect x="2.12" y="113.90" width="1.98" height="0.55" fill="#f2ee12"/><rect x="4.43" y="113.90" width="1.98" height="0.55" fill="#35b4f2"/><rect x="2.12" y="114.75" width="0.33" height="0.55" fill="#e2e4e7"/><rect x="3.44" y="115.60" width="0.66" height="0.55" fill="#35b4f2"/><rect x="4.43" y="115.60" width="3.96" height="0.55" fill="#e2e4e7"/><rect x="8.72" y="115.60" width="3.30" height="0.55" fill="#e2e4e7"/><rect x="12.02" y="115.60" width="3.96" height="0.55" fill="#e0147c"/><rect x="3.44" y="116.45" width="1.65" height="0.55" fill="#e2e4e7"/><rect x="5.42" y="116.45" width="1.32" height="0.55" fill="#22c42c"/><rect x="7.07" y="116.45" width="3.96" height="0.55" fill="#e2e4e7"/><rect x="11.36" y="116.45" width="3.96" height="0.55" fill="#f2ee12"/><rect x="3.44" y="117.30" width="0.99" height="0.55" fill="#e2e4e7"/><rect x="4.76" y="117.30" width="3.63" height="0.55" fill="#4fc1ff"/><rect x="3.44" y="118.15" width="0.66" height="0.55" fill="#f2ee12"/><rect x="4.43" y="118.15" width="1.32" height="0.55" fill="#ff8a12"/><rect x="3.44" y="119.00" width="1.65" height="0.55" fill="#35b4f2"/><rect x="5.42" y="119.00" width="0.66" height="0.55" fill="#4fc1ff"/><rect x="3.44" y="119.85" width="1.32" height="0.55" fill="#35b4f2"/><rect x="5.09" y="119.85" width="0.99" height="0.55" fill="#22c42c"/><rect x="3.44" y="120.70" width="0.66" height="0.55" fill="#e2e4e7"/><rect x="4.43" y="120.70" width="1.98" height="0.55" fill="#22c42c"/><rect x="3.44" y="121.55" width="2.31" height="0.55" fill="#f2ee12"/><rect x="6.08" y="121.55" width="3.96" height="0.55" fill="#e2e4e7"/><rect x="10.04" y="121.55" width="2.64" height="0.55" fill="#22c42c"/><rect x="3.44" y="122.40" width="0.66" height="0.55" fill="#e2e4e7"/><rect x="4.43" y="122.40" width="3.63" height="0.55" fill="#35b4f2"/><rect x="8.39" y="122.40" width="3.96" height="0.55" fill="#e2e4e7"/><rect x="2.12" y="123.25" width="0.33" height="0.55" fill="#e2e4e7"/><rect x="2.12" y="124.10" width="1.65" height="0.55" fill="#ff8a12"/><rect x="4.10" y="124.10" width="1.98" height="0.55" fill="#22c42c"/><rect x="2.12" y="125.80" width="0.33" height="0.55" fill="#e2e4e7"/><rect x="3.44" y="126.65" width="1.32" height="0.55" fill="#e2e4e7"/><rect x="5.09" y="126.65" width="2.97" height="0.55" fill="#22c42c"/><rect x="8.06" y="126.65" width="1.65" height="0.55" fill="#f2ee12"/><rect x="10.04" y="126.65" width="2.97" height="0.55" fill="#35b4f2"/><rect x="13.34" y="126.65" width="0.99" height="0.55" fill="#22c42c"/><rect x="3.44" y="127.50" width="1.32" height="0.55" fill="#35b4f2"/><rect x="5.09" y="127.50" width="1.65" height="0.55" fill="#e2e4e7"/><rect x="7.07" y="127.50" width="1.32" height="0.55" fill="#35b4f2"/><rect x="8.39" y="127.50" width="2.31" height="0.55" fill="#e2e4e7"/><rect x="11.03" y="127.50" width="3.30" height="0.55" fill="#4fc1ff"/><rect x="3.44" y="129.20" width="14.19" height="0.55" fill="#2187cc"/><rect x="3.44" y="130.05" width="1.65" height="0.55" fill="#35b4f2"/><rect x="5.42" y="130.05" width="0.66" height="0.55" fill="#e0147c"/><rect x="3.44" y="130.90" width="1.32" height="0.55" fill="#35b4f2"/><rect x="5.09" y="130.90" width="2.31" height="0.55" fill="#f02323"/><rect x="7.73" y="130.90" width="2.31" height="0.55" fill="#35b4f2"/><rect x="3.44" y="131.75" width="0.66" height="0.55" fill="#35b4f2"/><rect x="4.43" y="131.75" width="1.98" height="0.55" fill="#ff8a12"/><rect x="6.74" y="131.75" width="2.64" height="0.55" fill="#35b4f2"/><rect x="3.44" y="132.60" width="1.32" height="0.55" fill="#ff8a12"/><rect x="5.09" y="132.60" width="0.66" height="0.55" fill="#e2e4e7"/><rect x="6.08" y="132.60" width="3.96" height="0.55" fill="#ff8a12"/><rect x="10.37" y="132.60" width="1.65" height="0.55" fill="#e0147c"/><rect x="12.02" y="132.60" width="3.30" height="0.55" fill="#f02323"/><rect x="3.44" y="133.45" width="0.66" height="0.55" fill="#35b4f2"/><rect x="4.43" y="133.45" width="3.30" height="0.55" fill="#f2ee12"/><rect x="8.06" y="133.45" width="0.66" height="0.55" fill="#35b4f2"/><rect x="8.72" y="133.45" width="2.97" height="0.55" fill="#f02323"/><rect x="11.69" y="133.45" width="3.96" height="0.55" fill="#e0147c"/><rect x="3.44" y="134.30" width="0.99" height="0.55" fill="#e2e4e7"/><rect x="4.76" y="134.30" width="2.64" height="0.55" fill="#22c42c"/><rect x="7.73" y="134.30" width="1.98" height="0.55" fill="#e2e4e7"/></svg></div>
<div class="vs"><i></i></div>
<div class="hs"><i></i></div>
<div class="stat"><svg class="ic" width="6" height="5" viewBox="0 0 6 5"><rect x=".4" y=".4" width="5.2" height="4.2" rx=".6" fill="none" stroke="#aeb7be" stroke-width=".7"/><rect x="2.2" y="2.8" width="1.6" height="1.6" fill="#aeb7be"/></svg><span style="left:13.6px">Line 8, Column 34</span><span style="left:497.4px">Spaces: 4</span><span style="left:541.3px">Unity C#</span></div>
</div></div>
</body></html>
